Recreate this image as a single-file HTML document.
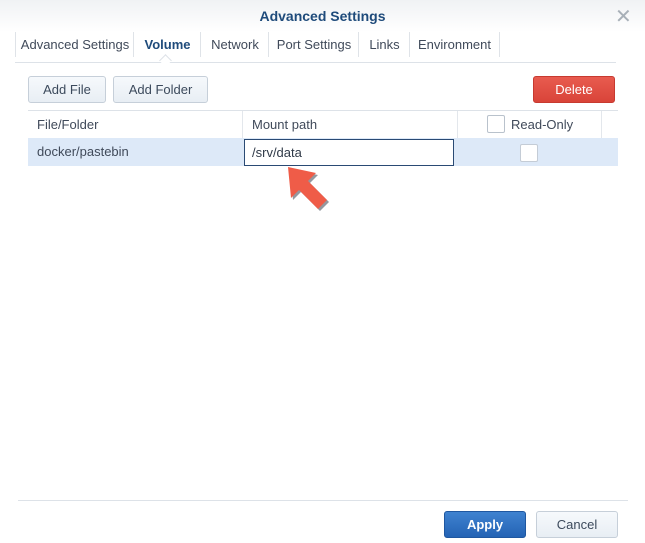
<!DOCTYPE html><html><head><style>
body{margin:0;width:645px;height:543px;background:#fff;font-family:"Liberation Sans",sans-serif;font-size:13px;color:#404a5a;position:relative;overflow:hidden}
.a{position:absolute}
.title{left:0;top:0;width:645px;height:32px;background:linear-gradient(#f0f2f4,#fff);text-align:center;line-height:32px;font-weight:bold;font-size:14px;color:#1f4b7b}
.tab{top:32px;height:25px;line-height:25px;text-align:center;border-left:1px solid #dfe3e8}
.btn{top:76px;height:25px;line-height:25px;border:1px solid #c6cfd9;border-radius:3px;background:linear-gradient(#f6f9fc,#e8eef4);text-align:center;color:#3c4a5c}
</style></head><body>
<div class="a title">Advanced Settings</div>
<div class="a" style="left:615px;top:4px;font-size:20px;color:#a8b0b8">✕</div>
<div class="a tab" style="left:15px;width:118px">Advanced Settings</div>
<div class="a tab" style="left:133px;width:67px;font-weight:bold;color:#1f4b7b">Volume</div>
<div class="a tab" style="left:200px;width:68px">Network</div>
<div class="a tab" style="left:268px;width:90px">Port Settings</div>
<div class="a tab" style="left:358px;width:51px">Links</div>
<div class="a tab" style="left:409px;width:89px;border-right:1px solid #dfe3e8">Environment</div>
<div class="a" style="left:15px;top:62px;width:494px;height:1px;background:#dde2e8"></div>
<div class="a" style="left:23px;top:62px;width:593px;height:1px;background:#dde2e8"></div>
<div class="a" style="left:161px;top:56px;width:8px;height:8px;background:#fff;border-left:1px solid #dde2e8;border-top:1px solid #dde2e8;transform:rotate(45deg)"></div>
<div class="a btn" style="left:28px;width:76px">Add File</div>
<div class="a btn" style="left:113px;width:93px">Add Folder</div>
<div class="a btn" style="left:533px;width:80px;background:linear-gradient(#e85b4f,#d94439);border-color:#c73a30;color:#fff">Delete</div>
<div class="a" style="left:28px;top:110px;width:590px;height:1px;background:#dde2e8"></div>
<div class="a" style="left:37px;top:111px;line-height:27px">File/Folder</div>
<div class="a" style="left:242px;top:111px;width:1px;height:27px;background:#e3e7ec"></div>
<div class="a" style="left:252px;top:111px;line-height:27px">Mount path</div>
<div class="a" style="left:457px;top:111px;width:1px;height:27px;background:#e3e7ec"></div>
<div class="a" style="left:601px;top:111px;width:1px;height:27px;background:#e3e7ec"></div>
<div class="a" style="left:487px;top:115px;width:16px;height:16px;border:1px solid #b9c2cc;border-radius:2px;background:#fff"></div>
<div class="a" style="left:511px;top:111px;line-height:27px">Read-Only</div>
<div class="a" style="left:28px;top:138px;width:590px;height:28px;background:#dde9f8"></div>
<div class="a" style="left:37px;top:138px;line-height:28px">docker/pastebin</div>
<div class="a" style="left:244px;top:139px;width:208px;height:25px;border:1px solid #2a4a74;background:#fff;line-height:25px;text-indent:7px;color:#303a48">/srv/data</div>
<div class="a" style="left:520px;top:144px;width:16px;height:16px;border:1px solid #c4ccd6;border-radius:2px;background:#fff"></div>
<svg class="a" style="left:0;top:0" width="645" height="543"><polygon points="290,169 318,175 310,183 329,202 320,211 301,192 293,200" fill="#2a3140" opacity=".5"/><polygon points="288,167 316,173 308,181 327,200 318,209 299,190 291,198" fill="#ef5c48"/></svg>
<div class="a" style="left:18px;top:500px;width:610px;height:1px;background:#dde2e8"></div>
<div class="a btn" style="left:444px;top:511px;width:80px;background:linear-gradient(#3f82d0,#2463b4);border-color:#1f57a0;color:#fff;font-weight:bold">Apply</div>
<div class="a btn" style="left:536px;top:511px;width:80px">Cancel</div>
</body></html>
